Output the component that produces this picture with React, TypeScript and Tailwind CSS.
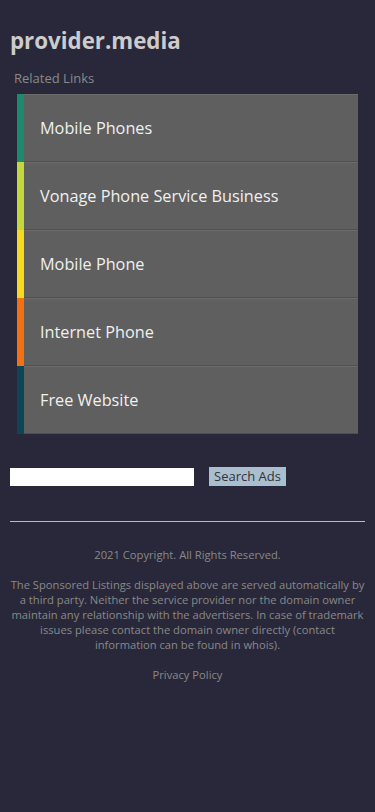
const links = [
  { label: "Mobile Phones", color: "bg-[#1d8a6c]" },
  { label: "Vonage Phone Service Business", color: "bg-[#c3d83a]" },
  { label: "Mobile Phone", color: "bg-[#f8d91c]" },
  { label: "Internet Phone", color: "bg-[#f57110]" },
  { label: "Free Website", color: "bg-[#0c4656]" },
];

const App: React.FC<{}> = () => {
  return (
    <div className="min-h-[812px] bg-[#29283a] font-['Open_Sans',sans-serif] px-[10px] pt-[27px] pb-10">
      <div className="text-[22.3px] leading-[28px] font-bold text-[#cccccc]">
        provider.media
      </div>
      <div className="mt-[14px] pl-[4px] text-[13px] leading-[18px] text-[#8a8a8a]">
        Related Links
      </div>
      <div className="mt-[7px] ml-[7px] mr-[7px]">
        {links.map((link, index) => (
          <a key={index} href="#" className="flex h-[68px] bg-[#5f5f5f]">
            <div className={`w-[7px] shrink-0 ${link.color}`} />
            <div className="flex flex-1 items-center border-t border-t-[#6b6b6b] border-b border-b-[#505050] pl-[16px] text-[16.25px] text-[#f0f0f0]">
              {link.label}
            </div>
          </a>
        ))}
      </div>
      <div className="mt-[33px] flex items-center">
        <input type="text" className="h-[18px] w-[184px] bg-white" />
        <button className="ml-[15px] h-[19px] bg-[#a9bfd0] px-[5px] text-[13px] leading-[19px] text-[#333333]">
          Search Ads
        </button>
      </div>
      <div className="mt-[35px] h-px bg-[#bbbbbb]" />
      <div className="mt-[25px] text-center text-[11.2px] leading-[15px] text-[#888888]">
        2021 Copyright. All Rights Reserved.
      </div>
      <div className="mt-[15px] text-center text-[11.2px] leading-[15px] text-[#888888]">
        The Sponsored Listings displayed above are served automatically by a
        third party. Neither the service provider nor the domain owner maintain
        any relationship with the advertisers. In case of trademark issues
        please contact the domain owner directly (contact information can be
        found in whois).
      </div>
      <div className="mt-[15px] text-center text-[11.2px] leading-[15px] text-[#888888]">
        Privacy Policy
      </div>
    </div>
  );
};

export default App;
